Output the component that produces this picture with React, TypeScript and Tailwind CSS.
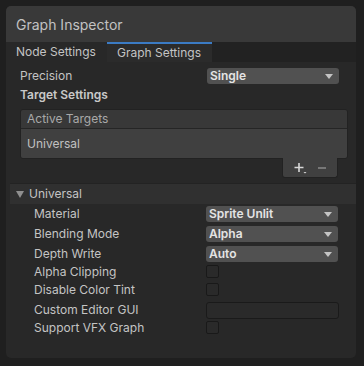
import React from "react";

const font = { fontFamily: "Inter, 'Noto Sans', sans-serif" };

function Dropdown({ value }: { value: string }) {
  return (
    <div className="flex h-[16px] w-[132px] items-center justify-between rounded-[3px] bg-[#515151] pl-[3px] pr-[6px]">
      <span className="text-[12px] font-semibold leading-none text-[#e4e4e4]">{value}</span>
      <svg width="8" height="5" viewBox="0 0 8 5">
        <path d="M0 0h8L4 5z" fill="#c4c4c4" />
      </svg>
    </div>
  );
}

function Checkbox() {
  return <div className="h-[13px] w-[13px] rounded-[2px] border border-[#191919] bg-[#2a2a2a]" />;
}

function Row({ label, children }: { label: string; children: React.ReactNode }) {
  return (
    <div className="flex h-[20px] items-center">
      <span className="w-[172px] shrink-0 text-[12px] text-[#c4c4c4]">{label}</span>
      {children}
    </div>
  );
}

function CheckRow({ label }: { label: string }) {
  return (
    <div className="flex h-[18px] items-start pt-[1px]">
      <span className="w-[172px] shrink-0 text-[12px] leading-[14px] text-[#c4c4c4]">{label}</span>
      <Checkbox />
    </div>
  );
}

export default function App() {
  return (
    <div className="h-[366px] w-[364px] bg-[#1f1f1f] p-[6px]" style={font}>
      <div className="flex h-[352px] w-[350px] flex-col overflow-hidden rounded-[5px] bg-[#282828]">
        <div className="flex h-[36px] shrink-0 items-center bg-[#393939] px-[10px] text-[14px] text-[#c2c2c2]">
          Graph Inspector
        </div>

        <div className="flex h-[20px] shrink-0 bg-[#222222]">
          <div className="flex w-[101px] items-center bg-[#282828] pl-[10px] text-[12px] text-[#c4c4c4]">
            Node Settings
          </div>
          <div className="flex w-[105px] items-center border-t-2 border-[#3b7bc4] bg-[#2b2b2b] pl-[10px] text-[12px] text-[#c4c4c4]">
            Graph Settings
          </div>
        </div>

        <div className="flex flex-col pl-[14px] pr-[17px] pt-[4px]">
          <div className="flex h-[20px] items-center">
            <span className="w-[187px] shrink-0 text-[12px] text-[#c4c4c4]">Precision</span>
            <Dropdown value="Single" />
          </div>
          <div className="flex h-[18px] items-center text-[12px] font-semibold text-[#c8c8c8]">
            Target Settings
          </div>

          <div className="mt-[5px] mr-[-9px] flex flex-col">
            <div className="overflow-hidden rounded-[3px] border border-[#222222]">
              <div className="flex h-[19px] items-center border-b border-[#252525] bg-[#383838] pl-[6px] text-[12px] text-[#a9a9a9]">
                Active Targets
              </div>
              <div className="flex h-[29px] items-center bg-[#404040] pl-[6px] text-[12px] text-[#c0c0c0]">
                Universal
              </div>
            </div>
            <div className="mr-[10px] mt-[-1px] flex h-[20px] w-[56px] items-center justify-around self-end rounded-b-[3px] border-x border-b border-[#222222] bg-[#404040] px-[6px]">
              <svg width="14" height="12" viewBox="0 0 14 12">
                <path d="M5 1v9M0.5 5.5h9" stroke="#d8d8d8" strokeWidth="1.6" />
                <path d="M9.5 10h3L11 11.5z" fill="#d8d8d8" />
              </svg>
              <svg width="10" height="10" viewBox="0 0 10 10">
                <path d="M1 5h8" stroke="#8a8a8a" strokeWidth="1.6" />
              </svg>
            </div>
          </div>
        </div>

        <div className="ml-[4px] mt-[5px] flex h-[21px] items-center border-t border-[#232323] bg-[#303030] pl-[6px]">
          <svg width="8" height="7" viewBox="0 0 8 7">
            <path d="M0 0h8L4 7z" fill="#8f8f8f" />
          </svg>
          <span className="ml-[5px] text-[12px] text-[#c4c4c4]">Universal</span>
        </div>

        <div className="flex flex-col pl-[28px] pr-[17px]">
          <Row label="Material">
            <Dropdown value="Sprite Unlit" />
          </Row>
          <Row label="Blending Mode">
            <Dropdown value="Alpha" />
          </Row>
          <Row label="Depth Write">
            <Dropdown value="Auto" />
          </Row>
          <CheckRow label="Alpha Clipping" />
          <CheckRow label="Disable Color Tint" />
          <Row label="Custom Editor GUI">
            <div className="h-[17px] w-[134px] rounded-[3px] border border-[#1a1a1a] bg-[#2a2a2a]" />
          </Row>
          <CheckRow label="Support VFX Graph" />
        </div>
      </div>
    </div>
  );
}
